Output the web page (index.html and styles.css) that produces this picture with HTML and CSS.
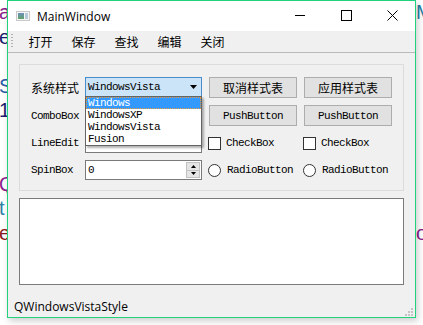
FILE: index.html
```html
<!DOCTYPE html>
<html>
<head>
<meta charset="utf-8">
<link rel="stylesheet" href="styles.css">
</head>
<body>
<div class="editor left">
  <p class="ln purple">a</p>
  <p class="ln navy">e</p>
  <p class="ln"></p>
  <p class="ln blue">S</p>
  <p class="ln navy">1</p>
  <p class="ln"></p>
  <p class="ln"></p>
  <p class="ln purple">Q</p>
  <p class="ln teal">t</p>
  <p class="ln red">e</p>
</div>
<div class="editor right">
  <p class="ln teal">M</p>
  <p class="ln"></p>
  <p class="ln"></p>
  <p class="ln"></p>
  <p class="ln"></p>
  <p class="ln"></p>
  <p class="ln"></p>
  <p class="ln"></p>
  <p class="ln"></p>
  <p class="ln purple">o</p>
</div>

<div class="window">
  <div class="titlebar">
    <svg class="app-icon" width="14" height="10" viewBox="0 0 14 10">
      <defs>
        <linearGradient id="g" x1="0" y1="0" x2="0" y2="1">
          <stop offset="0" stop-color="#6d8fb8"/>
          <stop offset="1" stop-color="#5fa36a"/>
        </linearGradient>
      </defs>
      <rect x="0.5" y="0.5" width="13" height="9" fill="#f6f6f6" stroke="#c9c9c9"/>
      <rect x="2" y="2" width="6" height="6" fill="url(#g)"/>
      <rect x="9" y="2" width="3" height="6" fill="#b9c9da"/>
    </svg>
    <span class="title">MainWindow</span>
    <div class="controls">
      <div class="ctl"><svg width="11" height="11" viewBox="0 0 11 11"><line x1="0" y1="5.5" x2="10" y2="5.5" stroke="#000" stroke-width="1"/></svg></div>
      <div class="ctl"><svg width="11" height="11" viewBox="0 0 11 11"><rect x="0.5" y="0.5" width="10" height="10" fill="none" stroke="#000" stroke-width="1"/></svg></div>
      <div class="ctl"><svg width="11" height="11" viewBox="0 0 11 11"><path d="M0.5 0.5 L10.5 10.5 M10.5 0.5 L0.5 10.5" stroke="#000" stroke-width="1" fill="none"/></svg></div>
    </div>
  </div>

  <div class="menubar">
    <svg class="grip" width="3" height="15" viewBox="0 0 3 15">
      <rect x="0" y="0" width="2" height="1" fill="#b0b0b0"/>
      <rect x="0" y="3" width="2" height="1" fill="#b0b0b0"/>
      <rect x="0" y="6" width="2" height="1" fill="#b0b0b0"/>
      <rect x="0" y="9" width="2" height="1" fill="#b0b0b0"/>
      <rect x="0" y="12" width="2" height="1" fill="#b0b0b0"/>
    </svg>
    <span class="menu-item">打开</span>
    <span class="menu-item">保存</span>
    <span class="menu-item">查找</span>
    <span class="menu-item">编辑</span>
    <span class="menu-item">关闭</span>
  </div>

  <div class="central">
    <div class="group">
      <span class="label cjk">系统样式</span>
      <div class="combo open">
        <span class="mono">WindowsVista</span>
        <svg class="arrow" width="7" height="4" viewBox="0 0 7 4"><path d="M0 0 H7 L3.5 4 Z" fill="#000"/></svg>
        <ul class="popup mono">
          <li class="sel">Windows</li>
          <li>WindowsXP</li>
          <li>WindowsVista</li>
          <li>Fusion</li>
        </ul>
      </div>
      <div class="btn cjk">取消样式表</div>
      <div class="btn cjk">应用样式表</div>

      <span class="label mono">ComboBox</span>
      <div class="combo plain"></div>
      <div class="btn mono">PushButton</div>
      <div class="btn mono">PushButton</div>

      <span class="label mono">LineEdit</span>
      <div class="lineedit"></div>
      <label class="check mono"><span class="box"></span>CheckBox</label>
      <label class="check mono"><span class="box"></span>CheckBox</label>

      <span class="label mono">SpinBox</span>
      <div class="spinbox">
        <span class="mono value">0</span>
        <div class="spin-btns">
          <span class="sb"><svg width="5" height="3" viewBox="0 0 5 3"><path d="M2.5 0 L5 3 H0 Z" fill="#000"/></svg></span>
          <span class="sb"><svg width="5" height="3" viewBox="0 0 5 3"><path d="M0 0 H5 L2.5 3 Z" fill="#000"/></svg></span>
        </div>
      </div>
      <label class="radio mono"><span class="dot"></span>RadioButton</label>
      <label class="radio mono"><span class="dot"></span>RadioButton</label>
    </div>
    <div class="textedit"></div>
  </div>

  <div class="statusbar">
    <span>QWindowsVistaStyle</span>
    <svg class="sizegrip" width="8" height="8" viewBox="0 0 8 8">
      <rect x="6" y="0" width="2" height="2" fill="#c4c4c4"/>
      <rect x="3" y="3" width="2" height="2" fill="#c4c4c4"/>
      <rect x="6" y="3" width="2" height="2" fill="#c4c4c4"/>
      <rect x="0" y="6" width="2" height="2" fill="#c4c4c4"/>
      <rect x="3" y="6" width="2" height="2" fill="#c4c4c4"/>
      <rect x="6" y="6" width="2" height="2" fill="#c4c4c4"/>
    </svg>
  </div>
</div>
</body>
</html>
```
FILE: styles.css
```css
html, body {
  margin: 0;
  padding: 0;
}
body {
  width: 423px;
  height: 325px;
  background: #fff;
  position: relative;
  overflow: hidden;
  font-family: "Open Sans", "Noto Sans CJK SC", sans-serif;
}

/* editor text behind the window */
.editor {
  position: absolute;
  top: 0;
  font-family: "Liberation Sans", sans-serif;
  font-size: 20px;
}
.editor.left { left: -1px; }
.editor.right { left: 416px; }
.ln {
  margin: 0;
  height: 24.5px;
  line-height: 24.5px;
}
.purple { color: #8a1b8a; }
.navy { color: #1c1c6e; }
.blue { color: #2b5ca6; }
.teal { color: #2a7fa6; }
.red { color: #8a1c1c; }

/* window */
.window {
  position: absolute;
  left: 7px;
  top: 0;
  width: 409px;
  height: 318px;
  box-sizing: border-box;
  border: 1px solid #1fd27b;
  background: #f0f0f0;
  display: flex;
  flex-direction: column;
  box-shadow: 2px 3px 7px rgba(0, 0, 0, 0.2);
}

.titlebar {
  flex: none;
  height: 30px;
  background: #fff;
  display: flex;
  align-items: center;
}
.app-icon {
  margin-left: 8px;
  display: block;
}
.title {
  margin-left: 7px;
  font-size: 12px;
  color: #000;
}
.controls {
  margin-left: auto;
  display: flex;
  align-self: stretch;
}
.ctl {
  width: 46px;
  display: flex;
  justify-content: center;
  align-items: flex-start;
  padding-top: 9px;
  box-sizing: border-box;
}
.ctl svg { display: block; }

.menubar {
  flex: none;
  height: 21px;
  border-bottom: 1px solid #b9b9b9;
  display: flex;
  align-items: center;
  padding-left: 3px;
  font-family: "Noto Sans CJK SC", sans-serif;
  font-size: 12px;
  color: #000;
}
.grip {
  display: block;
  margin-right: 5px;
}
.menu-item {
  padding: 0 9.5px;
  line-height: 21px;
}

.central {
  flex: none;
  padding: 11px;
  display: flex;
  flex-direction: column;
  gap: 7px;
}

.group {
  border: 1px solid #dcdcdc;
  padding: 12px 11px 10px 11px;
  display: grid;
  grid-template-columns: 47px 117px 88px 88px;
  grid-template-rows: 21px 21px 20px 20px;
  column-gap: 7px;
  row-gap: 7px;
  align-items: center;
}

.mono {
  font-family: "Liberation Mono", "Noto Sans CJK SC", monospace;
  font-size: 11px;
  letter-spacing: -0.6px;
  color: #000;
}
.cjk {
  font-family: "Noto Sans CJK SC", sans-serif;
  font-size: 12px;
  color: #000;
}
.label {
  white-space: nowrap;
}

.combo {
  position: relative;
  height: 20px;
  box-sizing: border-box;
  display: flex;
  align-items: center;
  padding-left: 2px;
  align-self: start;
}
.combo.open {
  background: #cce4f7;
  border: 1px solid #4a8bc9;
}
.combo.plain {
  background: #e1e1e1;
  border: 1px solid #adadad;
}
.arrow {
  margin-left: auto;
  margin-right: 4px;
  display: block;
}
.popup {
  position: absolute;
  z-index: 5;
  left: -1px;
  top: 18px;
  width: 117px;
  box-sizing: border-box;
  margin: 0;
  padding: 0;
  list-style: none;
  background: #fff;
  border: 1px solid #646464;
  box-shadow: 2px 2px 2px rgba(0, 0, 0, 0.3);
}
.popup li {
  height: 12px;
  line-height: 12px;
  padding-left: 2px;
  white-space: nowrap;
}
.popup li.sel {
  background: #3399ff;
  color: #fff;
  outline: 1px dotted #e89a3c;
  outline-offset: -1px;
}

.btn {
  height: 21px;
  box-sizing: border-box;
  border: 1px solid #adadad;
  background: #e1e1e1;
  display: flex;
  align-items: center;
  justify-content: center;
}

.lineedit {
  height: 20px;
  box-sizing: border-box;
  border: 1px solid #7a7a7a;
  background: #fff;
}

.check, .radio {
  display: flex;
  align-items: center;
  margin-left: -1px;
  white-space: nowrap;
}
.box {
  width: 13px;
  height: 13px;
  box-sizing: border-box;
  border: 1px solid #333;
  background: #fff;
  margin-right: 5px;
  flex: none;
}
.dot {
  width: 13px;
  height: 13px;
  box-sizing: border-box;
  border: 1px solid #333;
  border-radius: 50%;
  background: #fff;
  margin-right: 6px;
  flex: none;
}

.spinbox {
  height: 20px;
  box-sizing: border-box;
  border: 1px solid #7a7a7a;
  background: #fff;
  display: flex;
  align-items: stretch;
}
.spinbox .value {
  flex: 1;
  padding-left: 2px;
  line-height: 18px;
}
.spin-btns {
  width: 14px;
  margin: 1px 1px 1px 0;
  display: flex;
  flex-direction: column;
}
.sb {
  flex: 1;
  background: #e5e5e5;
  border: 1px solid #c2c2c2;
  display: flex;
  align-items: center;
  justify-content: center;
}
.sb + .sb { border-top: none; }
.sb svg { display: block; }

.textedit {
  height: 87px;
  box-sizing: border-box;
  border: 1px solid #7a7a7a;
  background: #fff;
}

.statusbar {
  flex: 1;
  position: relative;
  display: flex;
  align-items: center;
  padding-left: 6px;
  font-size: 12px;
  color: #000;
}
.sizegrip {
  position: absolute;
  right: 2px;
  bottom: 1px;
  display: block;
}
```
